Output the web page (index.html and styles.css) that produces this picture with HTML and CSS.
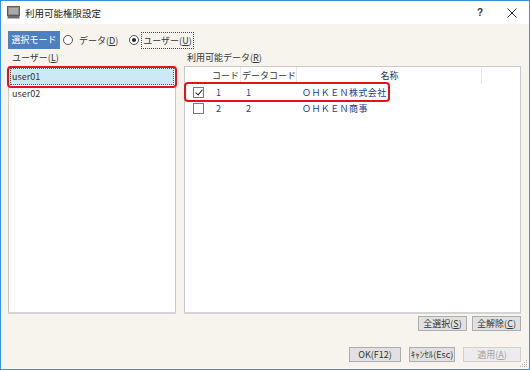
FILE: index.html
```html
<!DOCTYPE html>
<html lang="ja">
<head>
  <meta charset="UTF-8">
  <title>利用可能権限設定</title>
  <link rel="stylesheet" href="styles.css">
</head>
<body>
  <div class="window">
    <div class="titlebar">
      <svg class="app-icon" width="13" height="13" viewBox="0 0 13 13">
        <rect x="0.5" y="0.5" width="12" height="9" fill="#8c8c8c" stroke="#5a5a5a"/>
        <rect x="2" y="2" width="9" height="6" fill="#a9a9a9"/>
        <rect x="0.5" y="10" width="12" height="2.5" fill="#6e6e6e"/>
      </svg>
      <span class="title">利用可能権限設定</span>
      <span class="help">?</span>
      <svg class="close" width="10" height="10" viewBox="0 0 10 10">
        <path d="M0.5 0.5 L9.5 9.5 M9.5 0.5 L0.5 9.5" stroke="#222" stroke-width="1"/>
      </svg>
    </div>

    <div class="content">
      <div class="mode-row">
        <span class="mode-label">選択モード</span>
        <span class="radio"></span>
        <span class="radio-text">データ(<u>D</u>)</span>
        <span class="radio checked"></span>
        <span class="radio-text focus">ユーザー(<u>U</u>)</span>
      </div>

      <div class="panels">
        <div class="panel left">
          <div class="panel-label">ユーザー(<u>L</u>)</div>
          <div class="listbox">
            <div class="list-item selected marked">user01</div>
            <div class="list-item">user02</div>
          </div>
        </div>

        <div class="panel right">
          <div class="panel-label">利用可能データ(<u>R</u>)</div>
          <div class="listbox">
            <div class="grid-row header">
              <span></span>
              <span>コード</span>
              <span>データコード</span>
              <span class="center">名称</span>
              <span></span>
            </div>
            <div class="grid-row data marked">
              <span><i class="check on"></i></span>
              <span>1</span>
              <span>1</span>
              <span class="wide">ＯＨＫＥＮ株式会社</span>
              <span></span>
            </div>
            <div class="grid-row data">
              <span><i class="check"></i></span>
              <span>2</span>
              <span>2</span>
              <span class="wide">ＯＨＫＥＮ商事</span>
              <span></span>
            </div>
          </div>
        </div>
      </div>

      <div class="select-buttons">
        <button>全選択(<u>S</u>)</button>
        <button>全解除(<u>C</u>)</button>
      </div>

      <div class="dialog-buttons">
        <button class="ok">OK(F12)</button>
        <button class="cancel">ｷｬﾝｾﾙ(Esc)</button>
        <button class="apply" disabled>適用(<u>A</u>)</button>
      </div>

      <svg class="grip" width="8" height="8" viewBox="0 0 8 8">
        <rect x="6" y="0" width="1" height="1" fill="#b8b8b8"/>
        <rect x="4" y="2" width="1" height="1" fill="#b8b8b8"/>
        <rect x="6" y="2" width="1" height="1" fill="#b8b8b8"/>
        <rect x="2" y="4" width="1" height="1" fill="#b8b8b8"/>
        <rect x="4" y="4" width="1" height="1" fill="#b8b8b8"/>
        <rect x="6" y="4" width="1" height="1" fill="#b8b8b8"/>
        <rect x="0" y="6" width="1" height="1" fill="#b8b8b8"/>
        <rect x="2" y="6" width="1" height="1" fill="#b8b8b8"/>
        <rect x="4" y="6" width="1" height="1" fill="#b8b8b8"/>
        <rect x="6" y="6" width="1" height="1" fill="#b8b8b8"/>
      </svg>
    </div>
  </div>
</body>
</html>
```

FILE: styles.css
```css
body {
  margin: 0;
  background-color: #fff;
  font-family: 'Noto Sans CJK JP', 'Noto Sans', sans-serif;
  font-size: 9px;
  color: #333;
}

.window {
  width: 530px;
  height: 370px;
  box-sizing: border-box;
  border: 1px solid #3f8fdc;
  display: flex;
  flex-direction: column;
}

.titlebar {
  height: 23px;
  background-color: #fff;
  display: flex;
  align-items: center;
  padding-left: 6px;
  padding-right: 12px;
}

.app-icon {
  margin-right: 5px;
}

.title {
  font-size: 9.5px;
  color: #222;
  flex: 1;
}

.help {
  font-size: 10px;
  font-weight: bold;
  color: #333;
  margin-right: 24px;
  font-family: 'Liberation Sans', sans-serif;
}

.content {
  flex: 1;
  background-color: #f7f4ee;
  padding: 7px 8px 0 7px;
  position: relative;
}

.mode-row {
  display: flex;
  align-items: center;
  height: 18px;
}

.mode-label {
  background-color: #4f7fbf;
  color: #fff;
  width: 52px;
  height: 18px;
  line-height: 18px;
  text-align: center;
  box-sizing: border-box;
  margin-right: 3px;
}

.radio {
  width: 10px;
  height: 10px;
  border: 1px solid #555;
  border-radius: 50%;
  background-color: #fff;
  box-sizing: border-box;
  margin-right: 5px;
  position: relative;
}

.radio.checked::after {
  content: "";
  position: absolute;
  left: 2px;
  top: 2px;
  width: 4px;
  height: 4px;
  border-radius: 50%;
  background-color: #222;
}

.radio-text {
  margin-right: 10px;
  padding: 1px 1px;
}

.radio-text.focus {
  border: 1px dotted #444;
  margin-left: -3px;
}

.panels {
  display: flex;
  gap: 8px;
  margin-top: 3px;
}

.panel-label {
  height: 12px;
  line-height: 12px;
  padding-left: 4px;
  margin-bottom: 2px;
}

.panel.left {
  width: 168px;
}

.panel.right {
  flex: 1;
}

.panel.right .panel-label {
  padding-left: 3px;
}

.listbox {
  height: 248px;
  background-color: #fff;
  border: 1px solid #c9c9c9;
  border-bottom: 2px solid #d4d4d4;
  box-sizing: border-box;
}

.panel.left .listbox {
  padding: 1px;
}

.list-item {
  height: 17px;
  line-height: 17px;
  padding-left: 2px;
}

.list-item.selected {
  background-color: #cde8f7;
  outline: 1px dotted #555;
  outline-offset: -1px;
}

.marked {
  position: relative;
}

.list-item.marked::after {
  content: "";
  position: absolute;
  left: -3px;
  top: -2px;
  right: -3px;
  bottom: -3px;
  border: 2px solid #e0141e;
  border-radius: 4px;
}

.grid-row {
  display: grid;
  grid-template-columns: 26px 30px 56px 185px 1fr;
  align-items: center;
}

.grid-row.header {
  height: 17px;
}

.grid-row.header span {
  height: 17px;
  line-height: 17px;
  border-right: 1px solid #e8e8e8;
  padding-left: 1px;
}

.grid-row.header span:first-child,
.grid-row.header span:last-child {
  border-right: none;
}

.grid-row.data {
  height: 16px;
  color: #1f3d99;
}

.grid-row.data span {
  padding-left: 5px;
}

.grid-row.data span:first-child {
  padding-left: 8px;
  display: flex;
}

.grid-row.data.marked::after {
  content: "";
  position: absolute;
  left: -1px;
  top: -2px;
  width: 202px;
  bottom: -2px;
  border: 2px solid #e0141e;
  border-radius: 4px;
}

.center {
  text-align: center;
}

.wide {
  letter-spacing: 0.4px;
}

.check {
  display: block;
  width: 11px;
  height: 11px;
  border: 1px solid #7a7a7a;
  box-sizing: border-box;
  background-color: #fff;
  position: relative;
}

.check.on::after {
  content: "";
  position: absolute;
  left: 3px;
  top: 0;
  width: 3px;
  height: 6px;
  border-right: 1.5px solid #222;
  border-bottom: 1.5px solid #222;
  transform: rotate(40deg);
}

button {
  font-family: 'Noto Sans CJK JP', 'Noto Sans', sans-serif;
  font-size: 9px;
  color: #333;
  background-color: #e1e1e1;
  border: 1px solid #adadad;
  height: 15px;
  padding: 0;
  line-height: 13px;
}

.select-buttons {
  display: flex;
  justify-content: flex-end;
  gap: 5px;
  margin-top: 2px;
}

.select-buttons button {
  width: 49px;
}

.dialog-buttons {
  display: flex;
  justify-content: flex-end;
  gap: 8px;
  margin-top: 16px;
}

.dialog-buttons .ok {
  width: 52px;
}

.dialog-buttons .cancel {
  width: 46px;
}

.dialog-buttons .apply {
  width: 58px;
  color: #a3a3a3;
  background-color: #ececec;
  border-color: #cfcfcf;
}

.grip {
  position: absolute;
  right: 1px;
  bottom: 1px;
}
```
